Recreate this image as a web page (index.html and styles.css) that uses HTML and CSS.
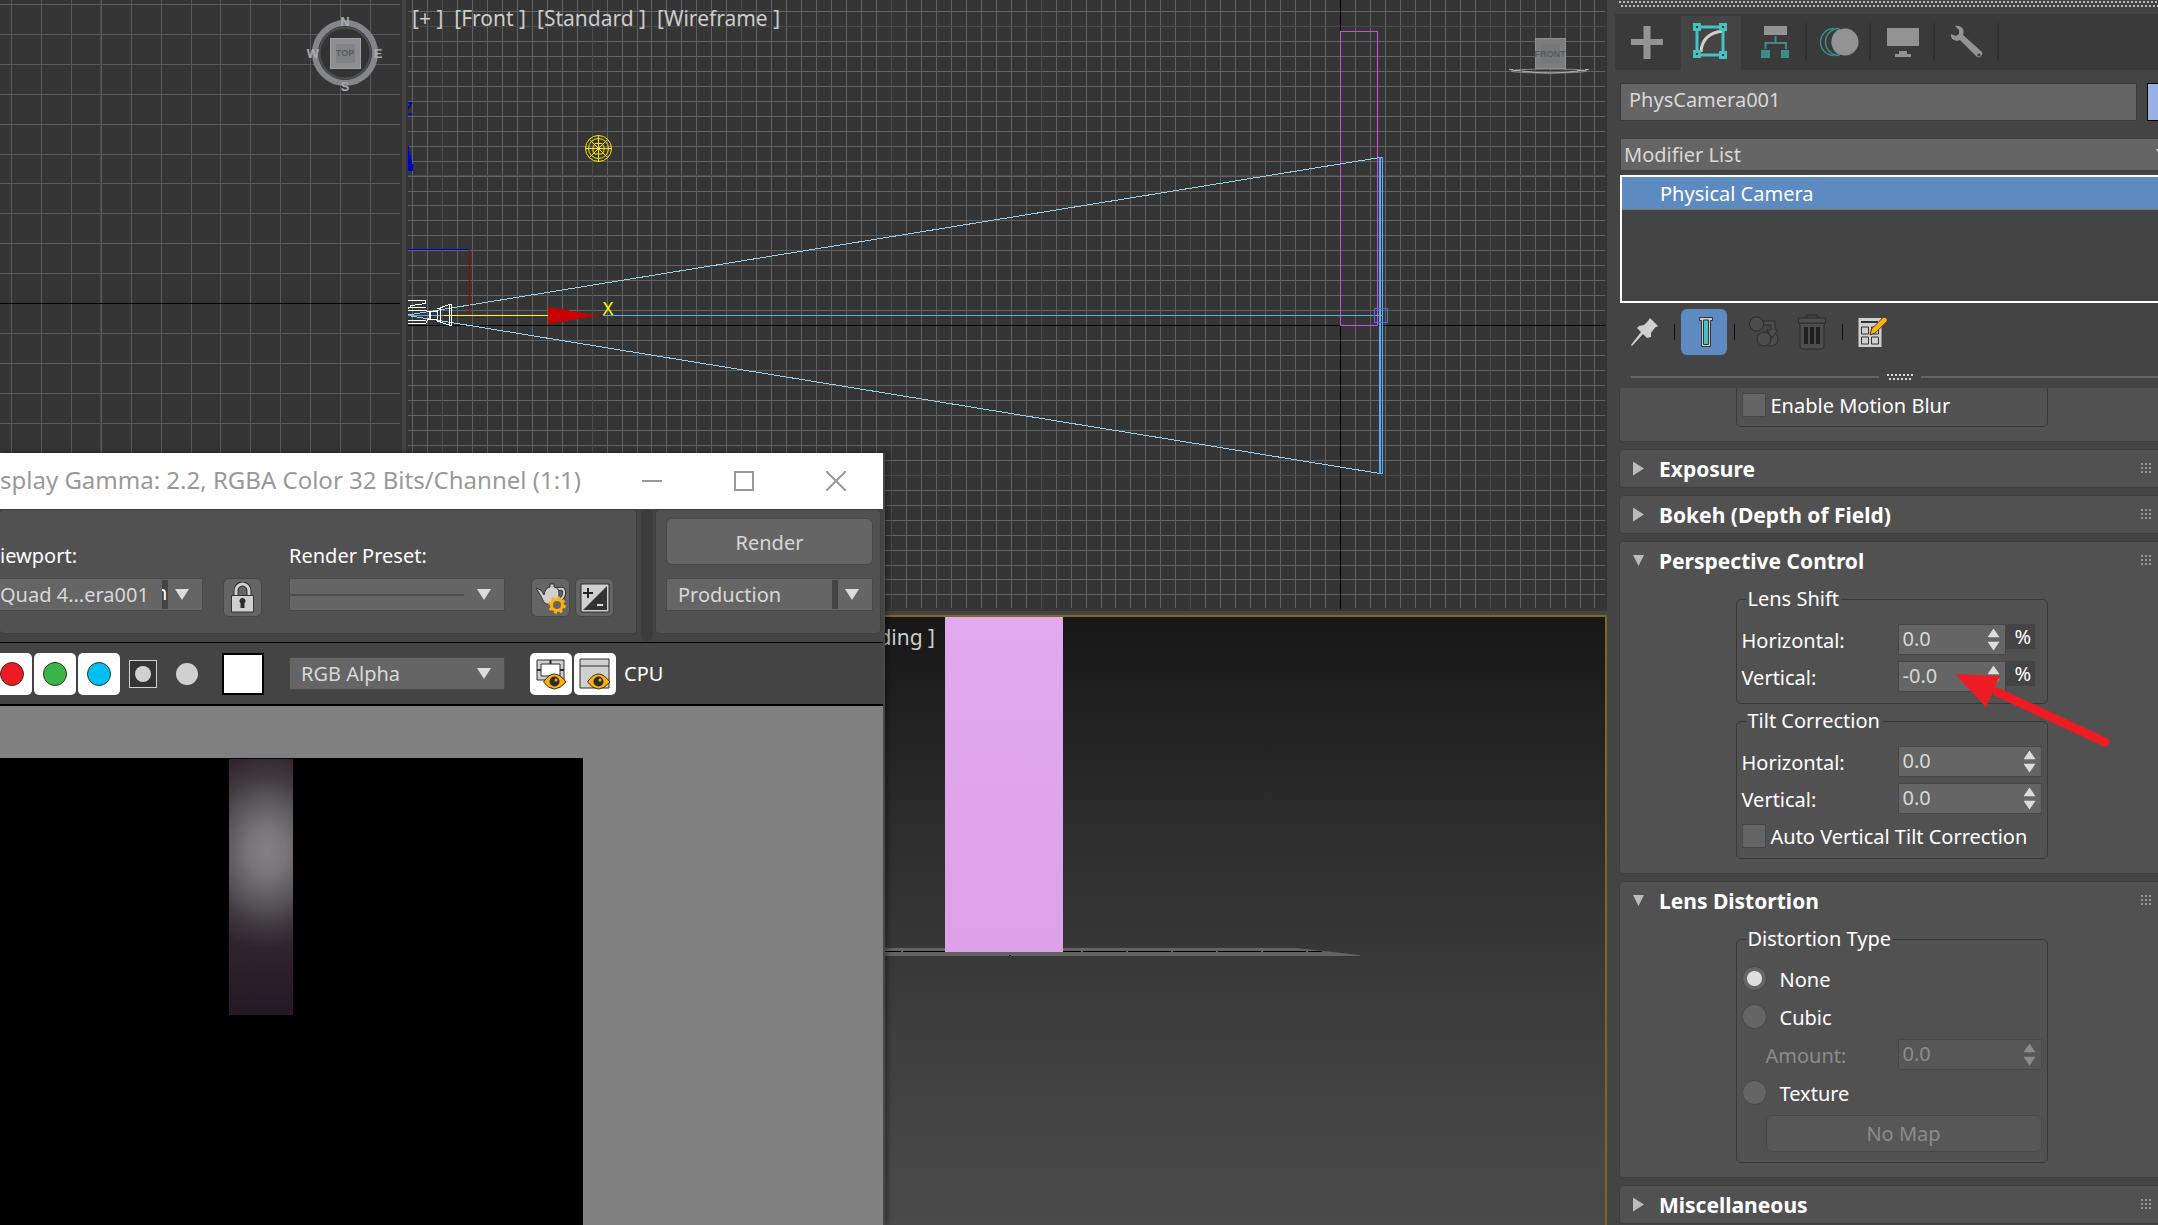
FILE: index.html
```html
<!DOCTYPE html>
<html lang="en">
<head>
<meta charset="utf-8">
<title>PhysCamera001</title>
<link rel="stylesheet" href="styles.css">
</head>
<body>
<div class="app">
  <main class="workspace">
    <section class="viewport" aria-label="Top viewport">
      <svg class="scene" shape-rendering="crispEdges" aria-hidden="true">
        <path d="M11 500H402" stroke="#5a5a5a" stroke-width="1000" stroke-dasharray="1 28.92"/>
        <path d="M200 4V611" stroke="#5a5a5a" stroke-width="400" stroke-dasharray="1 28.9"/>
        <path d="M100.500 0V611" stroke="#4a4a4a"/>
        <path d="M0 303.500H400" stroke="#000"/>
        <g shape-rendering="auto">
          <circle cx="345" cy="53" r="30" fill="#333" stroke="#83878c" stroke-width="6"/>
          <circle cx="345" cy="53" r="25.500" fill="none" stroke="#4c4e52" stroke-width="2"/>
          <rect x="330.500" y="38.500" width="30" height="30" fill="#8e8e8e" stroke="#a0a0a0"/>
          <rect x="336" y="44" width="19" height="19" fill="#828389"/>
          <text class="cube-face" x="345" y="56">TOP</text>
          <text class="compass" x="345" y="26">N</text>
          <text class="compass" x="345" y="91">S</text>
          <text class="compass" x="313" y="58">W</text>
          <text class="compass" x="378" y="58">E</text>
        </g>
      </svg>
    </section>

    <section class="viewport front" aria-label="Front viewport">
      <svg class="scene" shape-rendering="crispEdges" aria-hidden="true">
        <g transform="translate(-408 0)">
          <path d="M412 304H1605" stroke="#616161" stroke-width="608" stroke-dasharray="1 13.968"/>
          <path d="M1006 11V609" stroke="#616161" stroke-width="1198" stroke-dasharray="1 13.96"/>
          <path d="M442.500 0V609M592.500 0V609M741.500 0V609M891.500 0V609M1041.500 0V609M1190.500 0V609M1490.500 0V609M408 26.500H1605M408 175.500H1605M408 475.500H1605" stroke="#4a4a4a"/>
          <path d="M1340.500 0V609M408 325.500H1605" stroke="#000"/>
          <path d="M1340.500 31.500H1377.500V325.500H1340.500Z" fill="none" stroke="#c452dc"/>
          <path d="M408 315L1380 157.500H1383M408 315.500L1380 473.500H1383" fill="none" stroke="#98d2ee"/>
          <path d="M408 315.500H1382" stroke="#50aeee"/>
          <path d="M1379 157H1381V474H1379ZM1382 157H1383V474H1382Z" fill="#50b0ff"/>
          <rect x="1374.500" y="308.500" width="13" height="14" fill="none" stroke="#4a70d0"/>
          <path d="M408 249.500H469" stroke="#0000c0"/>
          <path d="M469.500 249V315" stroke="#a00000"/>
          <path d="M408 144L413 166V171H408Z" fill="#0000c8"/>
          <path d="M444 315.500H548" stroke="#ff0"/>
          <path d="M548 307L598 315.500L548 324Z" fill="#c80000"/>
          <path d="M598 315.500H603" stroke="#a00000"/>
          <path d="M408 300.500H425.500V303.500L411 305.500L409 308H408M408 307.500H426M408 310.500H426L429 312V318L426 323H408M408 320.500H426M429 311.500H437M429 319.500H437M430.500 311V320M437 309.500V321.500M440.500 308V322M437 309L449.500 304.500M437 321L449.500 325M449.500 304V325.500H451.500V304.500H449.500" fill="none" stroke="#fff"/>
          <g fill="none" stroke="#ffe600" stroke-width="1" shape-rendering="auto">
            <circle cx="598.500" cy="148.500" r="13"/>
            <circle cx="598.500" cy="148.500" r="10"/>
            <path d="M585 148.500H612M598.500 135V162M589 139L608 158M608 139L589 158M595 143.500H602L604 147V151L602 154H595L593 151V147Z"/>
          </g>
          <g shape-rendering="auto">
            <text class="axis-x" x="608" y="315">X</text>
            <text class="axis-z" x="408" y="115">Z</text>
            <ellipse cx="1549" cy="71" rx="38" ry="2" fill="none" stroke="#85888c" stroke-width="1"/>
            <rect x="1535.500" y="38.500" width="30" height="30" fill="#7c7c7c" stroke="#929292"/>
            <rect x="1541" y="44" width="19" height="19" fill="#76777a"/>
            <text class="cube-face" x="1550" y="57">FRONT</text>
            <path d="M1509 69.500H1513M1585 69.500H1589M1513 70.500H1521M1577 70.500H1585" stroke="#b0b0b4"/>
            <path d="M1522 71Q1550 75 1578 71" fill="none" stroke="#b0b0b4" stroke-width="1"/>
          </g>
        </g>
      </svg>
      <div class="viewport-menu"><span>[+ ]</span><span>[Front ]</span><span>[Standard ]</span><span>[Wireframe ]</span></div>
    </section>

    <section class="viewport hidden-view"></section>

    <section class="viewport camera" aria-label="Camera viewport">
      <svg class="scene" aria-hidden="true">
        <defs>
          <linearGradient id="pink" x1="0" y1="0" x2="0" y2="1"><stop offset="0" stop-color="#e2a9ee"/><stop offset="1" stop-color="#dda1e9"/></linearGradient>
        </defs>
        <g transform="translate(-408 -617)">
          <path d="M408 948H1296L1360 955V956H408Z" fill="#636363"/>
          <path d="M408 951.500H1322" stroke="#000" stroke-dasharray="43 2"/>
          <path d="M1009 955H1011V956H1009Z" fill="#000"/>
          <rect x="945" y="617" width="118" height="335" fill="url(#pink)"/>
        </g>
      </svg>
      <div class="viewport-menu shading"><span>[Shading ]</span></div>
    </section>
  </main>

  <aside class="command-panel">
    <div class="drag-strip"></div>
    <nav class="tabs" aria-label="Command panels">
      <button class="tab" aria-label="Create"><svg width="32" height="34" viewBox="0 0 32 34"><path d="M12.500 1h7v13H32v6H19.500v14h-7V20H0v-6h12.500z" fill="#939393"/></svg></button>
      <button class="tab active" aria-label="Modify"><svg width="36" height="38" viewBox="0 0 36 38"><g fill="none"><path d="M5 5H31V33H5Z" stroke="#45c1c1" stroke-width="3"/><path d="M9 30Q10 12 30 9" stroke="#d0d0d0" stroke-width="3"/><path d="M2.500 2.500h5v5h-5zM28.500 2.500h5v5h-5zM2.500 29.500h5v5h-5zM28.500 30.500h5v5h-5z" fill="#333" stroke="#45c1c1" stroke-width="3"/></g></svg></button>
      <button class="tab divided" aria-label="Hierarchy"><svg width="29" height="34" viewBox="0 0 29 34"><path d="M3 1H26V10H3Z" fill="#939393"/><path d="M14.500 11V18M4.500 24V18H25V24" fill="none" stroke="#3f8b8b" stroke-width="2"/><path d="M0 25H9V33H0ZM20 25H28V33H20Z" fill="#3f8b8b"/></svg></button>
      <button class="tab divided" aria-label="Motion"><svg width="39" height="30" viewBox="0 0 39 30"><g fill="none" stroke="#3f8b8b" stroke-width="1.500"><path d="M14 1.500A13.500 13.500 0 0 0 14 28.500"/><path d="M19 1.500A13.500 13.500 0 0 0 19 28.500"/></g><path d="M20 2A15 15 0 0 0 20 28" fill="none" stroke="#3f8b8b" stroke-width="2"/><circle cx="25" cy="15" r="13.500" fill="#939393"/></svg></button>
      <button class="tab divided" aria-label="Display"><svg width="32" height="29" viewBox="0 0 32 29"><path d="M0 0H32V18H0ZM12 23H20V26H24V29H8V26H12Z" fill="#939393"/></svg></button>
      <button class="tab divided" aria-label="Utilities"><svg width="34" height="34" viewBox="0 0 34 34"><path d="M5 1L9 5V9L6 11L1 9C0 14 5 17 10 15L27 32A3.800 3.800 0 0 0 32 27L13 10C15 5 12 0 5 1Z" fill="#939393"/><circle cx="29" cy="30" r="1.600" fill="#3a3a3a"/></svg></button>
    </nav>

    <div class="object-row">
      <input class="name-input" type="text" value="PhysCamera001" aria-label="Object name">
      <button class="object-color" aria-label="Object color"></button>
    </div>
    <div class="select modifier-select">
      <select aria-label="Modifier List"><option>Modifier List</option></select><i class="arrow"></i>
    </div>
    <ul class="stack"><li>Physical Camera</li></ul>

    <div class="stack-tools">
      <button aria-label="Pin stack"><svg width="27" height="28" viewBox="0 0 27 28"><path d="M19 0L27 8L24 9.500L20 15L20 19L16 20L12 16L1 28L0 27L10 14L6 10L8 8L13 7L17 3Z" fill="#d0d0d0"/></svg></button>
      <i class="sep"></i>
      <button class="on" aria-label="Show end result"><svg width="14" height="32" viewBox="0 0 14 32"><path d="M.5 1.500H13.500V4.500H11.500V30.500H2.500V4.500H.5Z" fill="#d0d0d0" stroke="#333"/><path d="M4.500 4H9.500V28.500H4.500Z" fill="#45c1c1" stroke="#333"/></svg></button>
      <i class="sep"></i>
      <button aria-label="Make unique" disabled><svg width="31" height="32" viewBox="0 0 31 32"><g fill="#4c4c4c" stroke="#2c2c2c"><circle cx="22" cy="23" r="7"/><path d="M14 5H26V14H29L23 22L18 14H22V9H14Z"/><circle cx="15" cy="23" r="7"/><circle cx="7.500" cy="8" r="7"/></g></svg></button>
      <button aria-label="Remove modifier" disabled><svg width="28" height="36" viewBox="0 0 28 36"><g fill="#4d4d4d" stroke="#2c2c2c"><path d="M7 5L9 1H19L21 5" fill="none"/><path d="M2 9V32Q2 35 5 35H23Q26 35 26 32V9Z"/><path d="M.5 4H27.500V9H.5Z"/></g><path d="M6 13H10V30H6ZM12 13H16V30H12ZM18 13H22V30H18Z" fill="#202020"/></svg></button>
      <i class="sep"></i>
      <button aria-label="Configure modifier sets"><svg width="30" height="32" viewBox="0 0 30 32"><path d="M.5 2H23.500V31H.5Z" fill="#d0d0d0"/><g fill="none" stroke="#333"><path d="M3 6H20" stroke-width="2"/><path d="M3.500 11H10.500V18H3.500ZM13.500 11H20.500V18H13.500ZM3.500 21H10.500V28H3.500ZM13.500 21H20.500V28H13.500Z"/></g><path d="M12 19L13.500 13L25 1.500Q27 0 29 2.500Q30 4 29 5.500L17 17Z" fill="#fdb211" stroke="#3a3a3a" stroke-width="1"/></svg></button>
    </div>
    <div class="splitter"><i></i></div>

    <div class="rollouts">
      <section class="rollout cut">
        <div class="group open-top">
          <label class="row"><input type="checkbox"><span>Enable Motion Blur</span></label>
        </div>
      </section>
      <section class="rollout"><button class="head"><i class="tri"></i><b>Exposure</b><i class="grip"></i></button></section>
      <section class="rollout"><button class="head"><i class="tri"></i><b>Bokeh (Depth of Field)</b><i class="grip"></i></button></section>
      <section class="rollout">
        <button class="head"><i class="tri down"></i><b>Perspective Control</b><i class="grip"></i></button>
        <div class="body">
          <fieldset class="group shift">
            <legend>Lens Shift</legend>
            <div class="row"><label for="sh">Horizontal:</label><span class="spin"><input id="sh" type="text" value="0.0"><i class="steps"></i></span><span class="unit">%</span></div>
            <div class="row"><label for="sv">Vertical:</label><span class="spin"><input id="sv" type="text" value="-0.0"><i class="steps"></i></span><span class="unit">%</span></div>
          </fieldset>
          <fieldset class="group tilt">
            <legend>Tilt Correction</legend>
            <div class="row"><label for="th">Horizontal:</label><span class="spin"><input id="th" type="text" value="0.0"><i class="steps"></i></span></div>
            <div class="row"><label for="tv">Vertical:</label><span class="spin"><input id="tv" type="text" value="0.0"><i class="steps"></i></span></div>
            <label class="row"><input type="checkbox"><span>Auto Vertical Tilt Correction</span></label>
          </fieldset>
        </div>
      </section>
      <section class="rollout">
        <button class="head"><i class="tri down"></i><b>Lens Distortion</b><i class="grip"></i></button>
        <div class="body">
          <fieldset class="group distortion">
            <legend>Distortion Type</legend>
            <label class="row"><input type="radio" name="dist" checked><span>None</span></label>
            <label class="row"><input type="radio" name="dist"><span>Cubic</span></label>
            <div class="row off"><label for="am">Amount:</label><span class="spin"><input id="am" type="text" value="0.0" disabled><i class="steps"></i></span></div>
            <label class="row"><input type="radio" name="dist"><span>Texture</span></label>
            <button class="map" disabled>No Map</button>
          </fieldset>
        </div>
      </section>
      <section class="rollout"><button class="head"><i class="tri"></i><b>Miscellaneous</b><i class="grip"></i></button></section>
    </div>
  </aside>

  <section class="render-window" aria-label="Rendered frame window">
    <header class="titlebar">
      <span class="title">splay Gamma: 2.2, RGBA Color 32 Bits/Channel (1:1)</span>
      <button aria-label="Minimize"><svg width="20" height="20"><path d="M0 10H20" stroke="#999" stroke-width="2"/></svg></button>
      <button aria-label="Maximize"><svg width="20" height="20"><path d="M1 1H19V19H1Z" fill="none" stroke="#999" stroke-width="2"/></svg></button>
      <button aria-label="Close"><svg width="20" height="20"><path d="M0 0L20 20M20 0L0 20" stroke="#999" stroke-width="2"/></svg></button>
    </header>
    <div class="render-bar">
      <div class="pane settings">
        <div class="field view-field">
          <label for="vp">iewport:</label>
          <div class="select"><select id="vp"><option>Quad 4...era001</option></select><i class="bar"><span>n</span></i><i class="arrow"></i></div>
        </div>
        <button class="tool lock" aria-label="Lock viewport"><svg width="23" height="31" viewBox="0 0 23 31"><path d="M5 14V9a6.500 7 0 0 1 13 0v5" fill="none" stroke="#2c2c2c" stroke-width="5"/><path d="M5 14V9a6.500 7 0 0 1 13 0v5" fill="none" stroke="#d0d0d0" stroke-width="3"/><path d="M.5 13.500H22.500V30H.5Z" fill="#d0d0d0" stroke="#333"/><path d="M11.500 16a3 3 0 0 1 2 5.300V26h-4v-4.700a3 3 0 0 1 2-5.300z" fill="#2c2c2c"/></svg></button>
        <div class="field preset-field">
          <label for="pre">Render Preset:</label>
          <div class="select preset"><select id="pre"><option></option></select><i class="rule"></i><i class="arrow"></i></div>
        </div>
        <button class="tool" aria-label="Render setup"><svg width="30" height="32" viewBox="0 0 30 32"><path d="M20 8Q29 4 28 12Q27 18 20 19" fill="none" stroke="#2c2c2c" stroke-width="4"/><path d="M20 8Q29 4 28 12Q27 18 20 19" fill="none" stroke="#d0d0d0" stroke-width="2"/><path d="M0 6L5 8L8 13Q9 6 14 5V2H18V5Q23 6 23 11Q23 19 19 22H10Q7 20 5 14Z" fill="#d0d0d0" stroke="#333"/><circle cx="21" cy="23" r="5.500" fill="#666" stroke="#fdb211" stroke-width="3"/><circle cx="21" cy="23" r="7.500" fill="none" stroke="#fdb211" stroke-width="2.500" stroke-dasharray="3 2.890"/></svg></button>
        <button class="tool" aria-label="Exposure control"><svg width="30" height="30" viewBox="0 0 30 30"><path d="M1 1H29V29H1Z" fill="#d0d0d0" stroke="#2c2c2c"/><path d="M27 3V27H3Z" fill="#333"/><path d="M3 10H13M8 5V15" stroke="#222" stroke-width="2"/><path d="M17 22H23" stroke="#ddd" stroke-width="2"/></svg></button>
      </div>
      <i class="pill"></i>
      <div class="pane production">
        <button class="render">Render</button>
        <div class="select"><select aria-label="Render mode"><option>Production</option></select><i class="bar"></i><i class="arrow"></i></div>
      </div>
    </div>
    <div class="channel-bar">
      <button class="chip red" aria-label="Red channel"><i></i></button>
      <button class="chip green" aria-label="Green channel"><i></i></button>
      <button class="chip blue" aria-label="Blue channel"><i></i></button>
      <button class="alpha" aria-label="Alpha channel"><i></i></button>
      <button class="mono" aria-label="Monochrome"></button>
      <button class="swatch" aria-label="Pixel color"></button>
      <div class="select channel-select"><select aria-label="Channel display"><option>RGB Alpha</option></select><i class="arrow"></i></div>
      <button class="chip eye" aria-label="Toggle overlay"><svg width="32" height="32" viewBox="0 0 32 32"><path d="M2 2H29V22H2Z" fill="#d0d0d0" stroke="#2c2c2c"/><path d="M15.500 2V6M2 12H6M25 12H29" stroke="#2c2c2c" stroke-width="2"/><path d="M6 6H25V18H6Z" fill="#fff" stroke="#2c2c2c"/><path d="M8.500 24Q19 8 31 24Q19 38 8.500 24Z" fill="#fdb211" stroke="#3a2c00"/><circle cx="19.500" cy="23.500" r="5" fill="#2c2c2c"/><circle cx="21" cy="22" r="1.500" fill="#fdb211"/></svg></button>
      <button class="chip eye" aria-label="Toggle interface"><svg width="32" height="32" viewBox="0 0 32 32"><path d="M1 1H30V30H1ZM1 8H30" fill="#d0d0d0" stroke="#2c2c2c"/><path d="M8.500 24Q19 8 31 24Q19 38 8.500 24Z" fill="#fdb211" stroke="#3a2c00"/><circle cx="19.500" cy="23.500" r="5" fill="#2c2c2c"/><circle cx="21" cy="22" r="1.500" fill="#fdb211"/></svg></button>
      <span class="cpu">CPU</span>
    </div>
    <div class="canvas"><div class="frame"><div class="box"></div></div></div>
  </section>

  <svg class="callout" width="156" height="76" viewBox="0 0 156 76" aria-hidden="true"><path d="M42 20L150 70" stroke="#ed1c24" stroke-width="9" stroke-linecap="round"/><path d="M0 2L45 4L31 35Z" fill="#ed1c24"/></svg>
</div>
</body>
</html>
```
FILE: styles.css
```css
* { box-sizing: border-box; }

html, body { height: 100%; }

body {
  margin: 0;
  background: #444;
  color: #fff;
  font: 20px/26px "Noto Sans", "Open Sans", sans-serif;
}

button, input, select {
  margin: 0;
  padding: 0;
  border: 0;
  border-radius: 0;
  background: none;
  color: inherit;
  font: inherit;
  appearance: none;
}

svg, i { display: block; flex: none; }
i { font-style: normal; }

.app {
  position: relative;
  display: flex;
  height: 100%;
  overflow: hidden;
}

/* Viewports */
.workspace {
  flex: 1;
  display: grid;
  grid-template: 611px 1fr / 402px 1fr;
  gap: 4px;
  min-width: 0;
}

.viewport {
  position: relative;
  min-width: 0;
  background: #353535;
  padding-right: 2px;
  overflow: hidden;
}

.scene { width: 100%; height: 100%; overflow: hidden; }
.front { padding: 0 2px 2px; }
.camera {
  border: 2px solid #7d6a22;
  border-bottom: 0;
  padding: 0;
  background: linear-gradient(#171717, #2d2d2d 35%, #3f3f3f 70%, #4a4a4a);
}

.viewport-menu {
  position: absolute;
  top: 5px;
  left: 6px;
  display: flex;
  gap: 11px;
  color: #ccc;
  font-size: 21px;
}
.shading { top: 7px; left: auto; right: 670px; }

.cube-face { font: bold 9px "Liberation Sans", sans-serif; fill: #585a60; text-anchor: middle; }
.compass { font: bold 13px "Liberation Sans", sans-serif; fill: #a8aaae; text-anchor: middle; }
.axis-x { font: 18px "Noto Sans", sans-serif; fill: #ff0; text-anchor: middle; }
.axis-z { font: 18px "Noto Sans", sans-serif; fill: #0000d0; text-anchor: middle; }

/* Command panel */
.command-panel {
  flex: 0 0 551px;
  display: flex;
  flex-direction: column;
  padding-left: 12px;
  min-width: 0;
}
.command-panel > * { flex: none; }

.drag-strip {
  height: 14px;
  background:
    repeating-linear-gradient(90deg, #bbb 0 2px, transparent 2px 4px) 0 1px / 100% 2px no-repeat,
    repeating-linear-gradient(90deg, transparent 0 2px, #bbb 2px 4px) 0 5px / 100% 2px no-repeat;
}

.tabs {
  display: flex;
  height: 56px;
  margin-left: -4px;
  background: #3a3a3a;
}
.tab {
  display: flex;
  align-items: center;
  justify-content: center;
  width: 64px;
}
.tab:first-child { width: 66px; padding-right: 2px; }
.tab.active { width: 60px; margin: 2px 2px 0 0; padding: 0 2px 4px 0; background: #444; }
.tab.divided {
  background: linear-gradient(#303030, #303030) right center / 2px 38px no-repeat;
}

.object-row { display: flex; gap: 10px; margin: 13px -26px 0 0; height: 38px; }
.name-input {
  flex: 1;
  min-width: 0;
  margin-left: 1px;
  padding: 0 8px 4px;
  background: #656565;
  border: 1px solid #3a3a3a;
  color: #d8d8d8;
}
.object-color { width: 37px; background: #99b0e5; border: 1px solid #000; }

.select {
  display: grid;
  grid-template-columns: 1fr auto auto;
  align-items: center;
  height: 33px;
  background: #656565;
  border: 1px solid #4a4a4a;
  color: #d8d8d8;
}
.select select {
  grid-area: 1 / 1 / 2 / -1;
  width: 100%;
  height: 100%;
  padding: 0 0 0 11px;
  text-overflow: clip;
}
.arrow {
  grid-row: 1;
  grid-column: 3;
  width: 14px;
  height: 11px;
  margin: 0 13px;
  background: #ddd;
  clip-path: polygon(0 0, 100% 0, 50% 100%);
  pointer-events: none;
}
.bar {
  grid-row: 1;
  grid-column: 2;
  width: 6px;
  height: 29px;
  margin-right: -6px;
  background: #444;
  overflow: hidden;
  pointer-events: none;
}

.modifier-select { margin: 17px -26px 0 1px; border-color: #3e3e3e; }
.modifier-select select { padding-left: 3px; }

.stack {
  height: 128px;
  margin: 4px -16px 0 1px;
  padding: 0;
  border: 2px solid #fff;
  list-style: none;
}
.stack li {
  height: 33px;
  padding: 4px 0 0 38px;
  background: #5e8ac2;
  border-bottom: 1px solid #7a7a7a;
}

.stack-tools { display: flex; align-items: center; height: 46px; margin: 6px 0 0 12px; }
.stack-tools .sep { width: 1px; height: 16px; background: #111; margin: 0 6px 0 16px; }
.stack-tools .on {
  display: flex;
  align-items: center;
  justify-content: center;
  width: 46px;
  height: 46px;
  padding-left: 4px;
  border-radius: 6px;
  background: #5e8ac2;
}
.stack-tools .on + .sep { margin: 0 14px 0 7px; }
.stack-tools button:disabled + button { margin-left: 18px; }
.stack-tools button:disabled + .sep { margin-right: 15px; }

.splitter {
  display: flex;
  align-items: center;
  gap: 8px;
  height: 8px;
  margin: 18px -16px 0 12px;
}
.splitter::before, .splitter::after { content: ""; height: 2px; background: #656565; flex: 0 0 248px; }
.splitter i {
  width: 26px;
  height: 6px;
  background:
    repeating-linear-gradient(90deg, #ddd 0 2px, transparent 2px 4px) 0 0 / 26px 2px no-repeat,
    repeating-linear-gradient(90deg, transparent 0 2px, #ddd 2px 4px) 0 4px / 24px 2px no-repeat;
}

/* Rollouts */
.rollouts {
  display: flex;
  flex-direction: column;
  gap: 7px;
  margin: 7px -6px 0 0;
}
.rollout {
  background: #515151;
  border: 1px solid #3e3e3e;
  border-radius: 4px;
}
.rollout.cut { border-top: 0; border-radius: 0 0 4px 4px; padding-bottom: 14px; }

.head {
  display: flex;
  align-items: center;
  width: 100%;
  height: 37px;
  padding: 0 10px 0 13px;
  font-size: 21px;
  text-align: left;
}
.head b { flex: 1; padding-left: 15px; }
.tri {
  width: 11px;
  height: 14px;
  background: #bbb;
  clip-path: polygon(0 0, 100% 50%, 0 100%);
}
.tri.down { height: 11px; clip-path: polygon(0 0, 100% 0, 50% 100%); }
.grip {
  width: 12px;
  height: 12px;
  background: conic-gradient(#999 25%, transparent 0) 2px 0 / 4px 4px;
}

.body { display: flex; flex-direction: column; gap: 4px; padding: 7px 0 14px; }

.group {
  width: 312px;
  min-width: 0;
  margin: 0 auto;
  padding: 12px 5px 11px;
  border: 1px solid #383838;
  border-radius: 5px;
}
.open-top { height: 39px; border-top: 0; border-radius: 0 0 5px 5px; padding: 1px 5px; }
.tilt { padding-bottom: 7px; }
.distortion { padding: 11px 5px 10px; }
legend { margin-left: 4px; padding: 0 2px; height: 26px; }

.row { display: flex; align-items: center; height: 31px; margin-top: 6px; }
.distortion .row + * { margin-top: 7px; }
legend + .row, .open-top .row { margin-top: 0; }
.row > label { flex: 0 0 156px; padding-top: 2px; }
.off > label { padding-left: 24px; }

.spin {
  flex: 1;
  display: flex;
  align-items: center;
  height: 31px;
  background: #656565;
  border: 1px solid #474747;
  color: #d8d8d8;
}
.spin input { flex: 1; width: 0; padding: 0 0 1px 4px; }
.shift .spin { flex: 0 0 108px; }
.steps {
  width: 12px;
  height: 22px;
  margin-right: 5px;
  background: #ddd;
  clip-path: polygon(50% 0, 100% 40%, 0 40%, 0 60%, 100% 60%, 50% 100%, 0 60%, 0 40%);
}
.unit {
  align-self: flex-start;
  width: 29px;
  height: 25px;
  padding-left: 9px;
  background: #444;
}
.off { color: #8c8c8c; }
.off .spin { background: #575757; color: #8c8c8c; }
.off .steps { background: #8c8c8c; }

input[type="checkbox"] {
  width: 24px;
  height: 24px;
  margin-right: 5px;
  background: #656565;
  border: 1px solid #474747;
}
input[type="radio"] {
  width: 25px;
  height: 25px;
  margin-right: 13px;
  border: 1px solid #474747;
  border-radius: 50%;
  background: #656565;
}
input[type="radio"]:checked { background: radial-gradient(circle, #ddd 7px, #656565 8px); }
.row > span:not(.spin):not(.unit) { padding-top: 2px; }

.map {
  display: block;
  width: 276px;
  height: 37px;
  margin-left: 24px;
  border: 1px solid #474747;
  border-radius: 6px;
  background: #575757;
  color: #8c8c8c;
}

/* Rendered frame window */
.render-window {
  position: absolute;
  left: 0;
  top: 453px;
  bottom: 0;
  width: 885px;
  display: flex;
  flex-direction: column;
  background: #444;
  border-right: 2px solid #484848;
  box-shadow: 2px 0 6px rgba(0, 0, 0, .4);
}
.titlebar {
  display: flex;
  align-items: center;
  height: 56px;
  padding-right: 37px;
  background: #fff;
  color: #999;
  font-size: 24px;
  line-height: 32px;
  gap: 72px;
}
.title { flex: 1; min-width: 0; padding-bottom: 2px; white-space: nowrap; }

.render-bar {
  display: flex;
  height: 134px;
  padding: 0 2px 8px 0;
  border-bottom: 1px solid #000;
}
.pane {
  background: #515151;
  border: 1px solid #3e3e3e;
  border-radius: 4px;
}
.settings {
  flex: none;
  width: 637px;
  display: flex;
  align-items: flex-start;
  border-left: 0;
}
.pill { width: 12px; height: 132px; margin: 0 2px 0 4px; border-radius: 6px; background: #3d3d3d; }
.production { flex: 1; padding: 8px 7px 0 10px; }
.render {
  display: block;
  width: 100%;
  height: 47px;
  margin-bottom: 13px;
  padding-top: 2px;
  border: 1px solid #474747;
  border-radius: 6px;
  background: #656565;
  color: #d8d8d8;
}

.field { padding-top: 32px; }
.field label { display: block; height: 36px; line-height: 28px; }
.view-field { width: 203px; }
.view-field .select { border-left: 0; }
.view-field select { padding-left: 0; }
.bar span { display: block; margin-left: -7px; color: #fff; }
.preset-field { width: 216px; margin: 0 26px 0 27px; }
.rule { grid-row: 1; grid-column: 1; height: 2px; background: #505050; pointer-events: none; }
.tool {
  display: flex;
  align-items: center;
  justify-content: center;
  width: 39px;
  height: 39px;
  margin-top: 68px;
  border: 1px solid #474747;
  border-radius: 6px;
  background: #656565;
}
.lock { margin-left: 20px; }
.tool + .tool { margin-left: 5px; }

.channel-bar {
  display: flex;
  align-items: center;
  height: 63px;
  border-bottom: 2px solid #000;
}
.chip {
  display: flex;
  align-items: center;
  justify-content: center;
  width: 42px;
  height: 42px;
  margin-right: 2px;
  border-radius: 5px;
  background: #fff;
}
.chip i { width: 24px; height: 24px; border: 1px solid #333; border-radius: 50%; }
.red { width: 32px; padding-right: 8px; border-radius: 0 5px 5px 0; }
.red i { background: #ed1c24; }
.green i { background: #39b54a; }
.blue i { background: #00bff3; }
.alpha {
  display: flex;
  align-items: center;
  justify-content: center;
  width: 28px;
  height: 28px;
  margin-left: 7px;
  border: 1px solid #d0d0d0;
  background: #333;
}
.alpha i { width: 16px; height: 16px; border-radius: 50%; background: #d0d0d0; }
.mono { width: 22px; height: 22px; margin-left: 19px; border-radius: 50%; background: #d0d0d0; }
.swatch { width: 42px; height: 42px; margin: 0 25px 0 24px; background: #fff; border: 2px solid #000; }
.channel-select { width: 216px; margin-right: 25px; }
.cpu { margin-left: 6px; }

.canvas { flex: 1; display: flex; padding-top: 52px; background: #808080; }
.frame { width: 583px; padding: 1px 0 0 229px; background: #000; }
.box {
  width: 64px;
  height: 256px;
  background: radial-gradient(ellipse 76px 98px at 38px 92px, #838183 0, #787478 25%, #58555a 55%, rgba(72, 66, 72, .7) 75%, transparent), linear-gradient(#32252f, #3a2d3b 35%, #31242f 70%, #241824);
}

/* Callout arrow drawn over the panel */
.callout { position: absolute; top: 672px; right: 47px; pointer-events: none; }
```
